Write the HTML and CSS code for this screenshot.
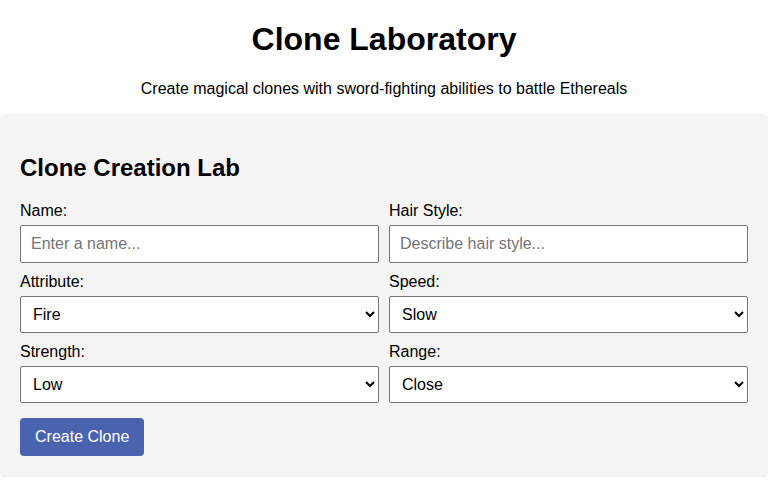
FILE: index.html
```html
<!DOCTYPE html>
<html lang="en">
<head>
<meta charset="utf-8">
<title>Clone Laboratory</title>
<link rel="stylesheet" href="styles.css">
</head>
<body>
<header class="header">
  <h1 class="title">Clone Laboratory</h1>
  <p class="subtitle">Create magical clones with sword-fighting abilities to battle Ethereals</p>
</header>
<section class="card">
  <h2 class="card-title">Clone Creation Lab</h2>
  <form class="form">
    <div class="grid">
      <div class="field">
        <label class="label" for="name">Name:</label>
        <input class="control" id="name" type="text" placeholder="Enter a name...">
      </div>
      <div class="field">
        <label class="label" for="hair">Hair Style:</label>
        <input class="control" id="hair" type="text" placeholder="Describe hair style...">
      </div>
      <div class="field">
        <label class="label" for="attr">Attribute:</label>
        <select class="control select" id="attr"><option>Fire</option><option>Water</option><option>Earth</option><option>Air</option></select>
      </div>
      <div class="field">
        <label class="label" for="speed">Speed:</label>
        <select class="control select" id="speed"><option>Slow</option><option>Medium</option><option>Fast</option></select>
      </div>
      <div class="field">
        <label class="label" for="str">Strength:</label>
        <select class="control select" id="str"><option>Low</option><option>Medium</option><option>High</option></select>
      </div>
      <div class="field">
        <label class="label" for="range">Range:</label>
        <select class="control select" id="range"><option>Close</option><option>Medium</option><option>Long</option></select>
      </div>
    </div>
    <button class="btn" type="button">Create Clone</button>
  </form>
</section>
</body>
</html>
```
FILE: styles.css
```css
html, body {
  margin: 0;
  padding: 0;
  background: #ffffff;
  font-family: "Liberation Sans", Arial, sans-serif;
  color: #000;
}
.header {
  text-align: center;
}
.title {
  font-size: 32px;
  margin: 21px 0 22px;
  line-height: normal;
}
.subtitle {
  font-size: 16px;
  margin: 0 0 16px;
}
.card {
  background: #f4f4f4;
  border-radius: 8px;
  box-shadow: 0 2px 5px rgba(0,0,0,0.1);
  padding: 20px 20px 21px;
}
.card-title {
  font-size: 24px;
  margin: 20px 0 20px;
}
.grid {
  display: grid;
  grid-template-columns: 1fr 1fr;
  column-gap: 10px;
  row-gap: 0;
}
.field {
  margin-bottom: 10px;
}
.label {
  display: block;
  font-size: 16px;
  margin-bottom: 5px;
}
.control {
  display: block;
  width: 100%;
  box-sizing: border-box;
  height: 38px;
  padding: 0 10px;
  font-family: "Liberation Sans", Arial, sans-serif;
  font-size: 16px;
  border: 1px solid #767676;
  border-radius: 2px;
  background: #fff;
  color: #000;
}
.control::placeholder {
  color: #757575;
}
.select {
  height: 37px;
  padding: 0 8px;
}
.btn {
  display: block;
  margin-top: 5px;
  background: #4a63ae;
  color: #fff;
  border: none;
  border-radius: 4px;
  padding: 10px 15px;
  font-family: "Liberation Sans", Arial, sans-serif;
  font-size: 16px;
  line-height: 18px;
  cursor: pointer;
}
```
